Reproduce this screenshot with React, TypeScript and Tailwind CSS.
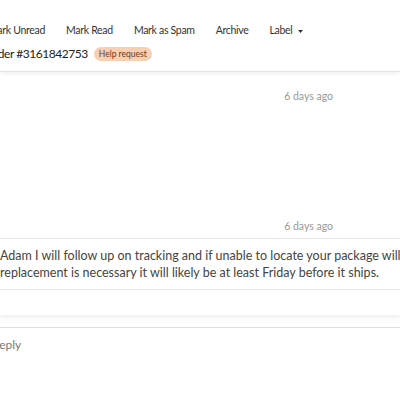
import React from "react";

const actions = ["Mark Unread", "Mark Read", "Mark as Spam", "Archive"];

const App: React.FC = () => {
  return (
    <div className="w-[400px] h-[400px] overflow-hidden bg-white text-[#222] font-['Lato','Liberation_Sans',sans-serif]">
      {/* conversation header */}
      <div className="h-[72px] border-b border-[#e4e4e4] shadow-[0_2px_4px_rgba(0,0,0,0.06)] relative z-10 bg-white">
        <div className="flex items-center gap-[21px] -ml-[12px] pt-[23px] h-[38px] text-[10.5px] tracking-[-0.3px] text-[#333]">
          {actions.map((a) => (
            <span key={a} className="whitespace-nowrap">
              {a}
            </span>
          ))}
          <span className="flex items-center gap-[5px] whitespace-nowrap">
            Label
            <svg width="5" height="3" viewBox="0 0 7 4" className="mt-[1px]">
              <path d="M0 0h7L3.5 4z" fill="#333" />
            </svg>
          </span>
        </div>
        <div className="flex items-center gap-[6px] -ml-[15px] mt-[7px]">
          <span className="text-[12px] tracking-[-0.45px] whitespace-nowrap text-[#222]">Order #3161842753</span>
          <span className="rounded-full bg-[#f8cfb2] text-[#6b3a1c] text-[8.5px] leading-[14px] px-[5px] whitespace-nowrap">
            Help request
          </span>
        </div>
      </div>

      {/* message 1 */}
      <div className="h-[147px]">
        <div className="flex justify-end pr-[67px] pt-[17px] text-[10.5px] leading-[14px] text-[#999]">
          6 days ago
        </div>
      </div>

      {/* message 2 */}
      <div>
        <div className="flex justify-end pr-[67px] text-[10.5px] leading-[14px] text-[#999]">
          6 days ago
        </div>
        <div className="mt-[5px] border-y border-[#e4e4e4] py-[8px] text-[12.5px] leading-[17px] text-[#444] whitespace-nowrap">
          Adam I will follow up on tracking and if unable to locate your package will
          <br />
          replacement is necessary it will likely be at least Friday before it ships.
        </div>
      </div>

      {/* end of thread */}
      <div className="h-[25px] shadow-[0_3px_4px_rgba(0,0,0,0.06)]" />

      {/* reply box */}
      <div className="mt-[12px] border-t border-[#e0e0e0] -ml-[8px] pt-[7px] text-[12px] leading-[20px] text-[#777]">
        Reply
      </div>
    </div>
  );
};

export default App;
